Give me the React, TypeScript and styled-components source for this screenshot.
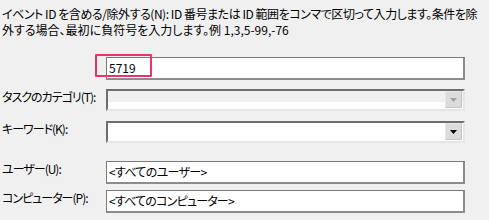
import React from "react";
import styled, { createGlobalStyle } from "styled-components";

const Global = createGlobalStyle`
  html, body { margin: 0; padding: 0; background: #f0f0f0; }
  body {
    font-family: "Noto Sans CJK JP", "Noto Sans", sans-serif;
    font-size: 12px;
    color: #000;
    font-feature-settings: "palt";
  }
`;

const Page = styled.div`
  width: 489px;
  height: 220px;
  box-sizing: border-box;
  padding: 6px 0 0 2px;
  background: #f0f0f0;
  overflow: hidden;
`;

const Intro = styled.div`
  line-height: 16px;
  white-space: nowrap;
`;

const Line = styled.div<{ $ls?: number }>`
  display: block;
  letter-spacing: ${(p) => p.$ls ?? 0}px;
`;

const Form = styled.div`
  display: grid;
  grid-template-columns: 104px 359px;
  margin-top: 19px;
`;

const Label = styled.div<{ $mt: number }>`
  grid-column: 1;
  margin-top: ${(p) => p.$mt}px;
  line-height: 16px;
  white-space: nowrap;
  align-self: start;
  letter-spacing: -1px;
`;

const Field = styled.div<{ $mt: number; $h: number; $ls?: number }>`
  grid-column: 2;
  position: relative;
  margin-top: ${(p) => p.$mt}px;
  height: ${(p) => p.$h}px;
  box-sizing: border-box;
  background: #fff;
  border-top: 1px solid #7a7a7a;
  border-left: 1px solid #7a7a7a;
  border-right: 2px solid #8c8c8c;
  border-bottom: 2px solid #8c8c8c;
  display: flex;
  align-items: center;
  padding-left: 2px;
  line-height: 16px;
  letter-spacing: ${(p) => p.$ls ?? 0}px;
  white-space: nowrap;
`;

const Highlight = styled.div`
  position: absolute;
  left: -12px;
  top: -4px;
  width: 57px;
  height: 23px;
  box-sizing: border-box;
  border: 2px solid #e8336b;
  border-radius: 1px;
  pointer-events: none;
`;

const Combo = styled.div<{ $mt: number; $disabled?: boolean }>`
  grid-column: 2;
  margin-top: ${(p) => p.$mt}px;
  height: 22px;
  box-sizing: border-box;
  border-top: 2px solid #6e6e6e;
  border-left: 2px solid #6e6e6e;
  border-right: 2px solid #e6e6e6;
  border-bottom: 2px solid #e6e6e6;
  background: ${(p) =>
    p.$disabled
      ? "linear-gradient(#f0f0f0 0, #f0f0f0 11px, #fff 11px)"
      : "#fff"};
  display: flex;
  justify-content: flex-end;
  align-items: stretch;
  padding: 0 0 1px 0;
`;

const DropButton = styled.div<{ $disabled?: boolean }>`
  width: 17px;
  box-sizing: border-box;
  background: #dcdcdc;
  border: 1px solid #e8e8e8;
  border-right-color: #c4c4c4;
  border-bottom-color: #c4c4c4;
  display: flex;
  align-items: center;
  justify-content: center;
  margin-right: 1px;
  svg {
    display: block;
  }
  svg path {
    fill: ${(p) => (p.$disabled ? "#a0a0a0" : "#000")};
  }
`;

const Arrow = () => (
  <svg width="7" height="4" viewBox="0 0 7 4">
    <path d="M0 0 H7 L3.5 4 Z" />
  </svg>
);

export default function App() {
  return (
    <>
      <Global />
      <Page>
        <Intro>
          <Line $ls={-0.45}>
            イベント ID を含める/除外する(N): ID 番号または ID 範囲をコンマで区切って入力します。条件を除
          </Line>
          <Line>外する場合、最初に負符号を入力します。例 1,3,5-99,-76</Line>
        </Intro>
        <Form>
          <Field $mt={0} $h={23}>
            5719
            <Highlight />
          </Field>

          <Label $mt={9}>タスクのカテゴリ(T):</Label>
          <Combo $mt={9} $disabled>
            <DropButton $disabled>
              <Arrow />
            </DropButton>
          </Combo>

          <Label $mt={10}>キーワード(K):</Label>
          <Combo $mt={10}>
            <DropButton>
              <Arrow />
            </DropButton>
          </Combo>

          <Label $mt={18}>ユーザー(U):</Label>
          <Field $mt={18} $h={23} $ls={-0.7}>
            &lt;すべてのユーザー&gt;
          </Field>

          <Label $mt={6}>コンピューター(P):</Label>
          <Field $mt={6} $h={23} $ls={-0.8}>
            &lt;すべてのコンピューター&gt;
          </Field>
        </Form>
      </Page>
    </>
  );
}
